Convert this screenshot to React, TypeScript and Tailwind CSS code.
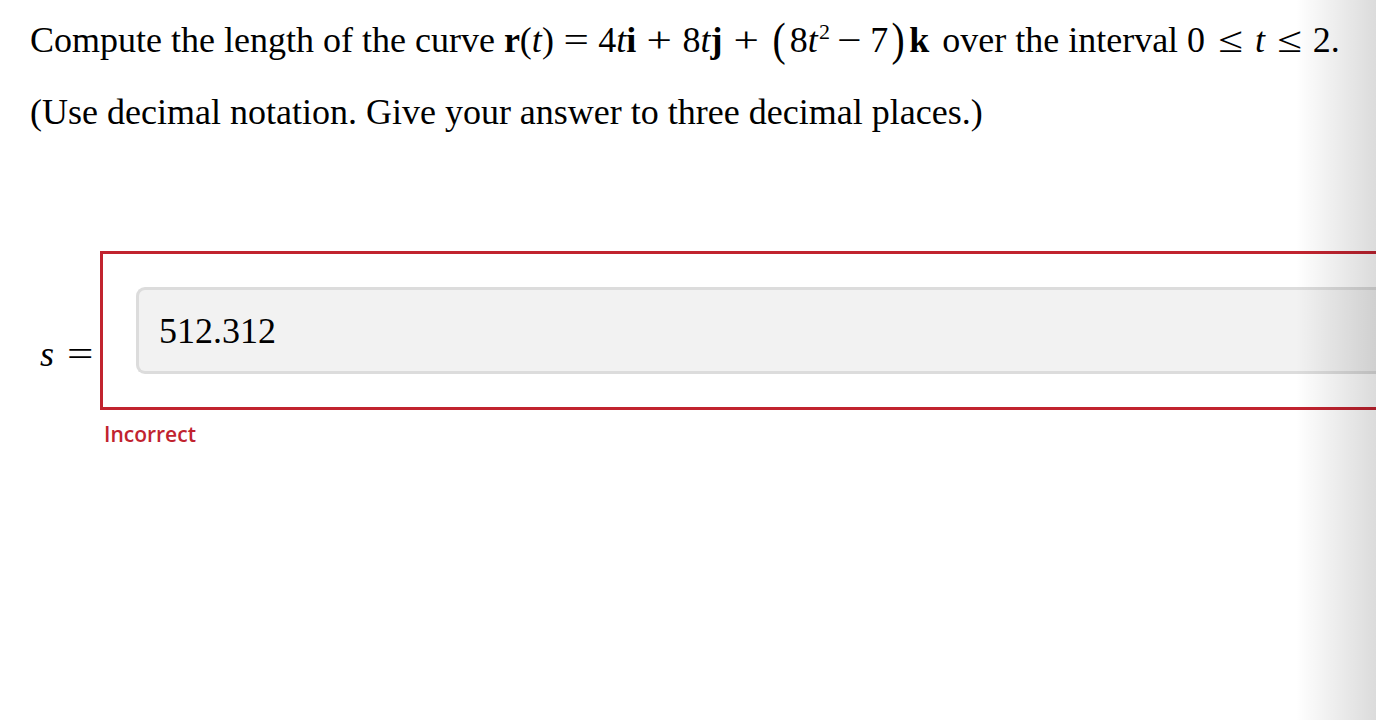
import React from "react";

const serif = { fontFamily: '"Liberation Serif", "Times New Roman", serif' };

export default function App() {
  return (
    <div className="relative w-[1376px] h-[720px] overflow-hidden bg-white text-black" style={serif}>
      <div className="pl-[30px] pt-[18px]">
        <p className="text-[36px] leading-[44px] whitespace-nowrap">
          Compute the length of the curve <b>r</b>(<i>t</i>)
          <span className="inline-block scale-x-[1.25] mx-[12px]">=</span>4<i>t</i><b>i</b>
          <span className="inline-block scale-x-[1.25] mx-[13px]">+</span>8<i>t</i><b>j</b>
          <span className="inline-block scale-x-[1.25] ml-[13px] mr-[17px]">+</span>
          <span className="inline-block scale-y-[1.3] scale-x-[1.1] origin-[50%_55%] mr-[5px]">(</span>8<i>t</i>
          <span className="text-[22px] relative top-[-13px] ml-[1px]">2</span>
          <span className="inline-block scale-x-[1.2] ml-[9px] mr-[11px]">−</span>7
          <span className="inline-block scale-y-[1.3] scale-x-[1.1] origin-[50%_55%] ml-[4px] mr-[5px]">)</span>
          <b className="mr-[4px]">k</b> over the interval 0
          <span className="inline-block scale-x-[1.25] ml-[16px] mr-[14px]">≤</span><i>t</i>
          <span className="inline-block scale-x-[1.25] ml-[15px] mr-[13px]">≤</span>2.
        </p>
        <p className="text-[36px] leading-[44px] mt-[23px] whitespace-nowrap">
          (Use decimal notation. Give your answer to three decimal places.)
        </p>
      </div>

      <div className="flex items-end pl-[40px] mt-[117px]">
        <div className="text-[36px] leading-none pb-[73px] w-[60px] whitespace-nowrap">
          <i>s</i>
          <span className="inline-block scale-x-[1.3] ml-[16px]">=</span>
        </div>
        <div className="flex-1">
          <div className="border-[3px] border-r-0 border-[#c1232f] pl-[33px] py-[33px]">
            <div className="h-[87px] rounded-l-[9px] bg-[#f2f2f2] border-[3px] border-r-0 border-[#dcdcdc] flex items-center pl-[20px]">
              <span className="text-[36px]">512.312</span>
            </div>
          </div>
          <div
            className="mt-[14px] ml-[4px] text-[21px] font-semibold text-[#c1232f] leading-none"
            style={{ fontFamily: '"Open Sans", sans-serif' }}
          >
            Incorrect
          </div>
        </div>
      </div>

      <div className="pointer-events-none absolute top-0 right-0 h-full w-[80px] bg-gradient-to-r from-transparent to-[#00000024]" />
    </div>
  );
}
